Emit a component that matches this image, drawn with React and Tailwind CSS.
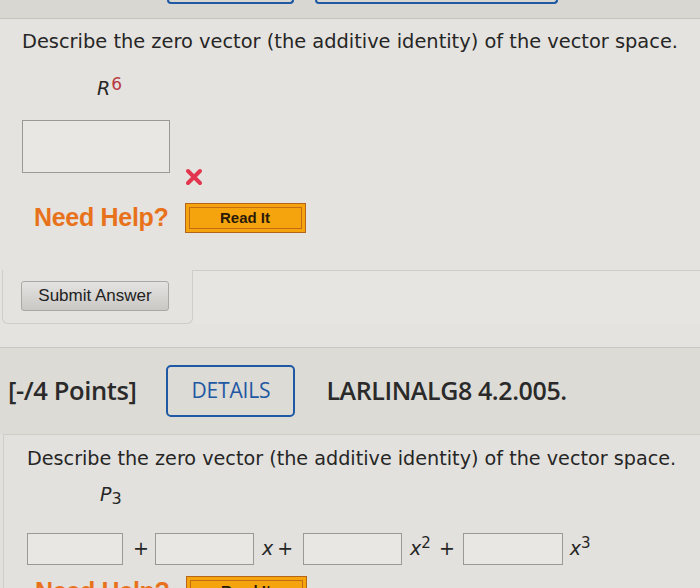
import React from "react";

const qFont = { fontFamily: '"DejaVu Sans", Verdana, sans-serif' };

function Box({ className }) {
  return <div className={`border border-[#9a9996] bg-[#e9e7e3] ${className}`} />;
}

function RedX() {
  return (
    <svg width="20" height="20" viewBox="0 0 20 20">
      <path d="M4 4 L16 16 M16 4 L4 16" stroke="#e2364f" strokeWidth="4" strokeLinecap="round" />
    </svg>
  );
}

function NeedHelp() {
  return (
    <div className="flex items-center">
      <span className="font-['Liberation_Sans',Arial,sans-serif] text-[25px] font-bold text-[#e8721c] tracking-[-0.3px]">
        Need Help?
      </span>
      <button className="ml-[16px] w-[121px] h-[30px] border border-[#b5651a] bg-[#f5a40e] p-[3px]">
        <div className="h-full w-full border border-[#c26c14] flex items-center justify-center font-['Liberation_Sans',Arial,sans-serif] text-[15px] font-bold text-[#2a1a08]">
          Read It
        </div>
      </button>
    </div>
  );
}

export default function App() {
  return (
    <div className="w-[700px] h-[588px] overflow-hidden bg-[#e2e0dc] text-[#262626]">
      {/* top strip with button edges */}
      <div className="h-[19px] bg-[#d9d7d2] border-b border-[#c6c4bf] flex items-start pl-[167px]">
        <div className="w-[127px] h-[4px] border-x-2 border-b-2 border-[#1f58a3] rounded-b-[4px]" />
        <div className="ml-[21px] w-[243px] h-[4px] border-x-2 border-b-2 border-[#1f58a3] rounded-b-[4px]" />
      </div>

      {/* first question */}
      <div className="bg-[#e5e3df]">
        <div className="pl-[22px] pt-[11px]">
          <p style={qFont} className="text-[19.4px] leading-[24px] whitespace-nowrap">
            Describe the zero vector (the additive identity) of the vector space.
          </p>
          <div style={qFont} className="pl-[75px] mt-[20px] h-[30px] text-[19px] italic">
            R<sup className="text-[17px] not-italic text-[#b83a40] relative -top-[5px] ml-[1px]">6</sup>
          </div>
          <div className="flex items-end mt-[16px]">
            <Box className="w-[148px] h-[53px]" />
            <div className="ml-[14px] -mb-[14px]">
              <RedX />
            </div>
          </div>
          <div className="mt-[26px] pl-[12px]">
            <NeedHelp />
          </div>
        </div>

        {/* submit area */}
        <div className="mt-[33px] flex items-start">
          <div className="w-[191px] h-[54px] ml-[2px] border-l border-r border-b border-[#cfcdc8] rounded-bl-[6px] rounded-br-[6px] pl-[18px] pt-[11px]">
            <button className="w-[148px] h-[30px] rounded-[3px] border border-[#a9a8a5] bg-gradient-to-b from-[#e4e3e1] to-[#c9c8c5] font-['Liberation_Sans',Arial,sans-serif] text-[17px] text-[#222]">
              Submit Answer
            </button>
          </div>
          <div className="flex-1 h-[54px] border-t border-[#cfcdc8] bg-[#e7e5e1]" />
        </div>
        <div className="h-[24px] border-b border-[#c8c6c1]" />
      </div>

      {/* points row */}
      <div className="h-[86px] bg-[#dddbd6] flex items-center pl-[8px] font-['Open_Sans',sans-serif]">
        <span className="text-[25.5px] font-semibold text-[#2a2a2a] tracking-[-0.4px]">[-/4 Points]</span>
        <div className="ml-[30px] w-[129px] h-[52px] border-2 border-[#1f58a3] rounded-[5px] flex items-center justify-center text-[21px] text-[#1f58a3] tracking-[-0.2px]">
          DETAILS
        </div>
        <span className="ml-[31px] text-[25px] font-semibold text-[#2a2a2a] tracking-[-0.4px]">
          LARLINALG8 4.2.005.
        </span>
      </div>

      {/* second question */}
      <div className="bg-[#e3e1dd] border-t border-[#cfcdc8] ml-[3px] border-l pl-[23px] pt-[12px] h-[200px]">
        <p style={qFont} className="text-[19.2px] leading-[24px] whitespace-nowrap">
          Describe the zero vector (the additive identity) of the vector space.
        </p>
        <div style={qFont} className="pl-[73px] mt-[9px] h-[30px] text-[19px] italic">
          P<sub className="text-[16px] not-italic relative top-[3px]">3</sub>
        </div>
        <div style={qFont} className="mt-[23px] flex items-center text-[19px]">
          <Box className="w-[96px] h-[32px]" />
          <span className="ml-[10px]">+</span>
          <Box className="ml-[6px] w-[99px] h-[32px]" />
          <span className="ml-[8px] italic">x</span>
          <span className="ml-[4px]">+</span>
          <Box className="ml-[10px] w-[99px] h-[32px]" />
          <span className="ml-[8px] italic">
            x<sup className="text-[15px] not-italic">2</sup>
          </span>
          <span className="ml-[8px]">+</span>
          <Box className="ml-[8px] w-[100px] h-[32px]" />
          <span className="ml-[7px] italic">
            x<sup className="text-[15px] not-italic">3</sup>
          </span>
        </div>
        <div className="mt-[8px] pl-[8px]">
          <NeedHelp />
        </div>
      </div>
    </div>
  );
}
